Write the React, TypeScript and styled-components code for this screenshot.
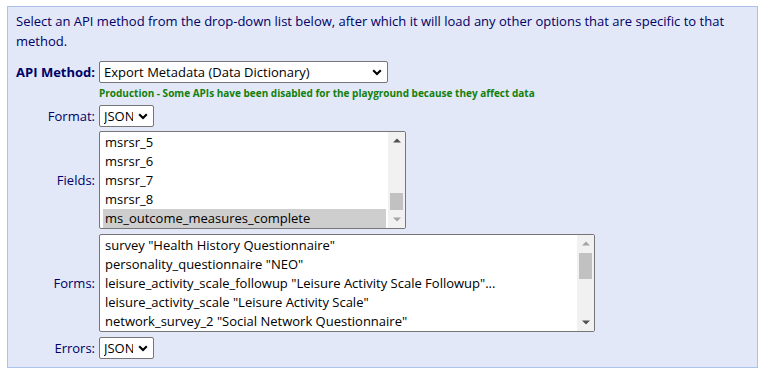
import React from "react";
import styled, { createGlobalStyle } from "styled-components";

const GlobalStyle = createGlobalStyle`
  body {
    margin: 0;
    background: #ffffff;
    font-family: "Open Sans", "DejaVu Sans", sans-serif;
  }
`;

const Panel = styled.div`
  box-sizing: border-box;
  margin: 6px 0 0 7px;
  width: 751px;
  height: 362px;
  padding: 5px 8px 0 7px;
  background: #e2e8f8;
  border: 1px solid #abc2ec;
  color: #000066;
  font-size: 13px;
`;

const Intro = styled.p`
  margin: 0 0 10px 1px;
  line-height: 19.5px;
  padding-right: 10px;
`;

const Form = styled.div`
  display: grid;
  grid-template-columns: 80px auto;
  column-gap: 4px;
  align-items: center;
`;

const Label = styled.div<{ $bold?: boolean; $gap?: number }>`
  display: flex;
  justify-content: flex-end;
  white-space: nowrap;
  font-weight: ${(p) => (p.$bold ? 700 : 400)};
  margin-top: ${(p) => p.$gap ?? 0}px;
`;

const Cell = styled.div<{ $gap?: number }>`
  display: flex;
  margin-top: ${(p) => p.$gap ?? 0}px;
`;

const SelectWrap = styled.div<{ $width: number }>`
  position: relative;
  width: ${(p) => p.$width}px;
  height: 22px;
`;

const Select = styled.select`
  appearance: none;
  box-sizing: border-box;
  width: 100%;
  height: 100%;
  margin: 0;
  padding: 0 20px 0 4px;
  border: 1px solid #767676;
  border-radius: 2px;
  background: #ffffff;
  color: #000000;
  font-family: "Open Sans", "DejaVu Sans", sans-serif;
  font-size: 13px;
`;

const Chevron = styled.svg`
  position: absolute;
  right: 6px;
  top: 8px;
  pointer-events: none;
`;

const Note = styled.div`
  color: #12800c;
  font-weight: 700;
  font-size: 10px;
  line-height: 14px;
  margin-top: 3px;
`;

const ListBox = styled.div<{ $width: number }>`
  box-sizing: border-box;
  display: flex;
  width: ${(p) => p.$width}px;
  height: 98px;
  border: 1px solid #767676;
  border-radius: 2px;
  background: #ffffff;
  overflow: hidden;
`;

const Options = styled.div`
  flex: 1;
  padding: 1px 2px 0 3px;
  min-width: 0;
`;

const Option = styled.div<{ $selected?: boolean }>`
  height: 19px;
  line-height: 19px;
  padding: 0 2px;
  color: #000000;
  white-space: nowrap;
  overflow: hidden;
  background: ${(p) => (p.$selected ? "#cecece" : "transparent")};
`;

const Scrollbar = styled.div`
  display: flex;
  flex-direction: column;
  width: 17px;
  background: #f1f1f1;
`;

const ArrowBtn = styled.div`
  height: 17px;
  display: flex;
  align-items: center;
  justify-content: center;
`;

const Track = styled.div`
  flex: 1;
  position: relative;
`;

const Thumb = styled.div`
  position: absolute;
  left: 2px;
  right: 2px;
  background: #c1c1c1;
`;

const Arrow: React.FC<{ up?: boolean; disabled?: boolean }> = ({ up, disabled }) => (
  <ArrowBtn>
    <svg width="8" height="5" viewBox="0 0 8 5">
      <polygon
        points={up ? "0,4.5 8,4.5 4,0.5" : "0,0.5 8,0.5 4,4.5"}
        fill={disabled ? "#a3a3a3" : "#505050"}
      />
    </svg>
  </ArrowBtn>
);

const Dropdown: React.FC<{ width: number; value: string; options: string[] }> = ({
  width,
  value,
  options,
}) => (
  <SelectWrap $width={width}>
    <Select defaultValue={value}>
      {options.map((o) => (
        <option key={o}>{o}</option>
      ))}
    </Select>
    <Chevron width="10" height="7" viewBox="0 0 10 7">
      <path d="M1.2 1.2 L5 5 L8.8 1.2" fill="none" stroke="#000" strokeWidth="2.1" />
    </Chevron>
  </SelectWrap>
);

const List: React.FC<{
  width: number;
  items: string[];
  selected?: number;
  thumbTop: number;
  thumbHeight: number;
  atTop?: boolean;
  atBottom?: boolean;
}> = ({ width, items, selected, thumbTop, thumbHeight, atTop, atBottom }) => (
  <ListBox $width={width}>
    <Options>
      {items.map((it, i) => (
        <Option key={it} $selected={i === selected}>
          {it}
        </Option>
      ))}
    </Options>
    <Scrollbar>
      <Arrow up disabled={atTop} />
      <Track>
        <Thumb style={{ top: thumbTop, height: thumbHeight }} />
      </Track>
      <Arrow disabled={atBottom} />
    </Scrollbar>
  </ListBox>
);

const fields = ["msrsr_5", "msrsr_6", "msrsr_7", "msrsr_8", "ms_outcome_measures_complete"];

const forms = [
  'survey "Health History Questionnaire"',
  'personality_questionnaire "NEO"',
  'leisure_activity_scale_followup "Leisure Activity Scale Followup"...',
  'leisure_activity_scale "Leisure Activity Scale"',
  'network_survey_2 "Social Network Questionnaire"',
];

export default function App() {
  return (
    <>
      <GlobalStyle />
      <Panel>
        <Intro>
          Select an API method from the drop-down list below, after which it will load any other options that
          are specific to that method.
        </Intro>
        <Form>
          <Label $bold>API Method:</Label>
          <Cell>
            <Dropdown
              width={289}
              value="Export Metadata (Data Dictionary)"
              options={["Export Metadata (Data Dictionary)", "Export Records", "Export Instruments"]}
            />
          </Cell>
          <div />
          <Note>Production - Some APIs have been disabled for the playground because they affect data</Note>
          <Label $gap={5}>Format:</Label>
          <Cell $gap={5}>
            <Dropdown width={55} value="JSON" options={["JSON", "CSV", "XML"]} />
          </Cell>
          <Label $gap={4}>Fields:</Label>
          <Cell $gap={4}>
            <List width={307} items={fields} selected={4} thumbTop={44} thumbHeight={17} atBottom />
          </Cell>
          <Label $gap={5}>Forms:</Label>
          <Cell $gap={5}>
            <List width={496} items={forms} thumbTop={1} thumbHeight={26} atTop />
          </Cell>
          <Label $gap={5}>Errors:</Label>
          <Cell $gap={5}>
            <Dropdown width={55} value="JSON" options={["JSON", "CSV", "XML"]} />
          </Cell>
        </Form>
      </Panel>
    </>
  );
}
